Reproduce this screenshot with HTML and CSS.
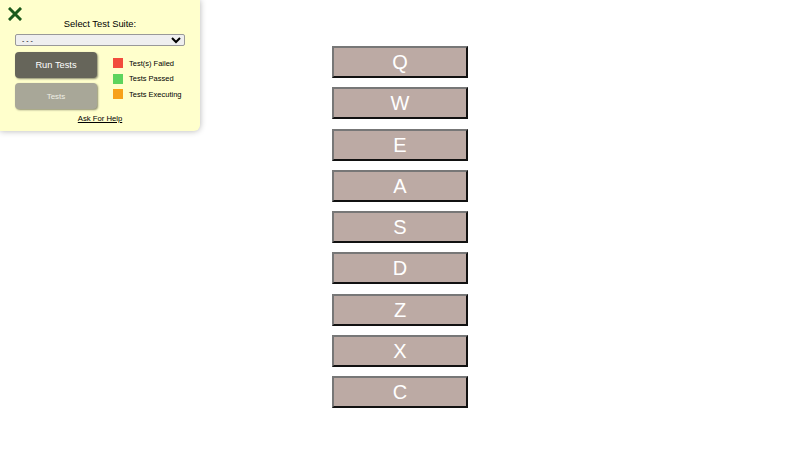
FILE: index.html
```html
<!DOCTYPE html>
<html>
<head>
<meta charset="utf-8">
<link rel="stylesheet" href="styles.css">
</head>
<body>
<div class="panel">
  <svg class="close" width="14" height="14" viewBox="0 0 14 14"><path d="M2 2 L12 12 M12 2 L2 12" stroke="#1b5a1b" stroke-width="3" stroke-linecap="square"/></svg>
  <div class="title">Select Test Suite:</div>
  <select class="suite"><option>- - -</option></select>
  <div class="controls">
    <div class="buttons">
      <button class="btn run">Run Tests</button>
      <button class="btn tests">Tests</button>
    </div>
    <div class="legend">
      <div class="item"><span class="sq red"></span>Test(s) Failed</div>
      <div class="item"><span class="sq green"></span>Tests Passed</div>
      <div class="item"><span class="sq orange"></span>Tests Executing</div>
    </div>
  </div>
  <a class="help" href="#">Ask For Help</a>
</div>
<div class="keys">
  <div class="key">Q</div>
  <div class="key">W</div>
  <div class="key">E</div>
  <div class="key">A</div>
  <div class="key">S</div>
  <div class="key">D</div>
  <div class="key">Z</div>
  <div class="key">X</div>
  <div class="key">C</div>
</div>
</body>
</html>
```
FILE: styles.css
```css
html, body { margin: 0; padding: 0; background: #fff; }
body { font-family: "Liberation Sans", Arial, sans-serif; width: 800px; height: 450px; overflow: hidden; }

.panel {
  position: absolute; left: 0; top: 0;
  width: 200px; height: 131px; box-sizing: border-box;
  background: #ffffcc;
  border-bottom-right-radius: 6px;
  box-shadow: 0 0 6px rgba(0,0,0,0.3);
  padding: 17px 15px 0 15px;
}
.close { position: absolute; left: 8px; top: 7px; }
.title { text-align: center; font-size: 9.4px; color: #000; line-height: 13px; }
.suite {
  display: block; width: 170px; height: 12px; margin-top: 4px;
  font-size: 7px; font-family: "Liberation Sans", Arial, sans-serif;
  padding: 0 2px; border: 1px solid #999; border-radius: 2px; background: #efefef; color: #000;
}
.controls { display: flex; margin-top: 6px; }
.buttons { display: flex; flex-direction: column; gap: 5px; }
.btn {
  width: 82px; height: 26px; border: none; border-radius: 4px;
  font-family: "Liberation Sans", Arial, sans-serif; font-size: 9.3px;
  box-shadow: 1px 1px 2px rgba(0,0,0,0.45); padding: 0;
}
.run { background: #66655a; color: #fff; }
.tests { background: #a8a798; color: #eeeee4; font-size: 8px; }
.legend { display: flex; flex-direction: column; gap: 5.5px; margin-left: 16px; margin-top: 6px; }
.item { display: flex; align-items: center; font-size: 7.5px; height: 10px; color: #000; white-space: nowrap; }
.sq { width: 10px; height: 10px; margin-right: 6px; flex: none; }
.red { background: #f24c3d; }
.green { background: #5dd45d; }
.orange { background: #f7a11a; }
.help { display: block; text-align: center; font-size: 7.7px; color: #000; text-decoration: underline; margin-top: 5px; }

.keys { display: flex; flex-direction: column; align-items: center; padding-top: 46px; gap: 9.25px; }
.key {
  width: 136px; height: 32px; box-sizing: border-box;
  background: #bcaaa4; color: #fff;
  border: 2px solid;
  border-color: #777 #111 #111 #777;
  font-size: 20px; line-height: 28px; text-align: center;
  font-family: "Liberation Sans", Arial, sans-serif;
}
```
